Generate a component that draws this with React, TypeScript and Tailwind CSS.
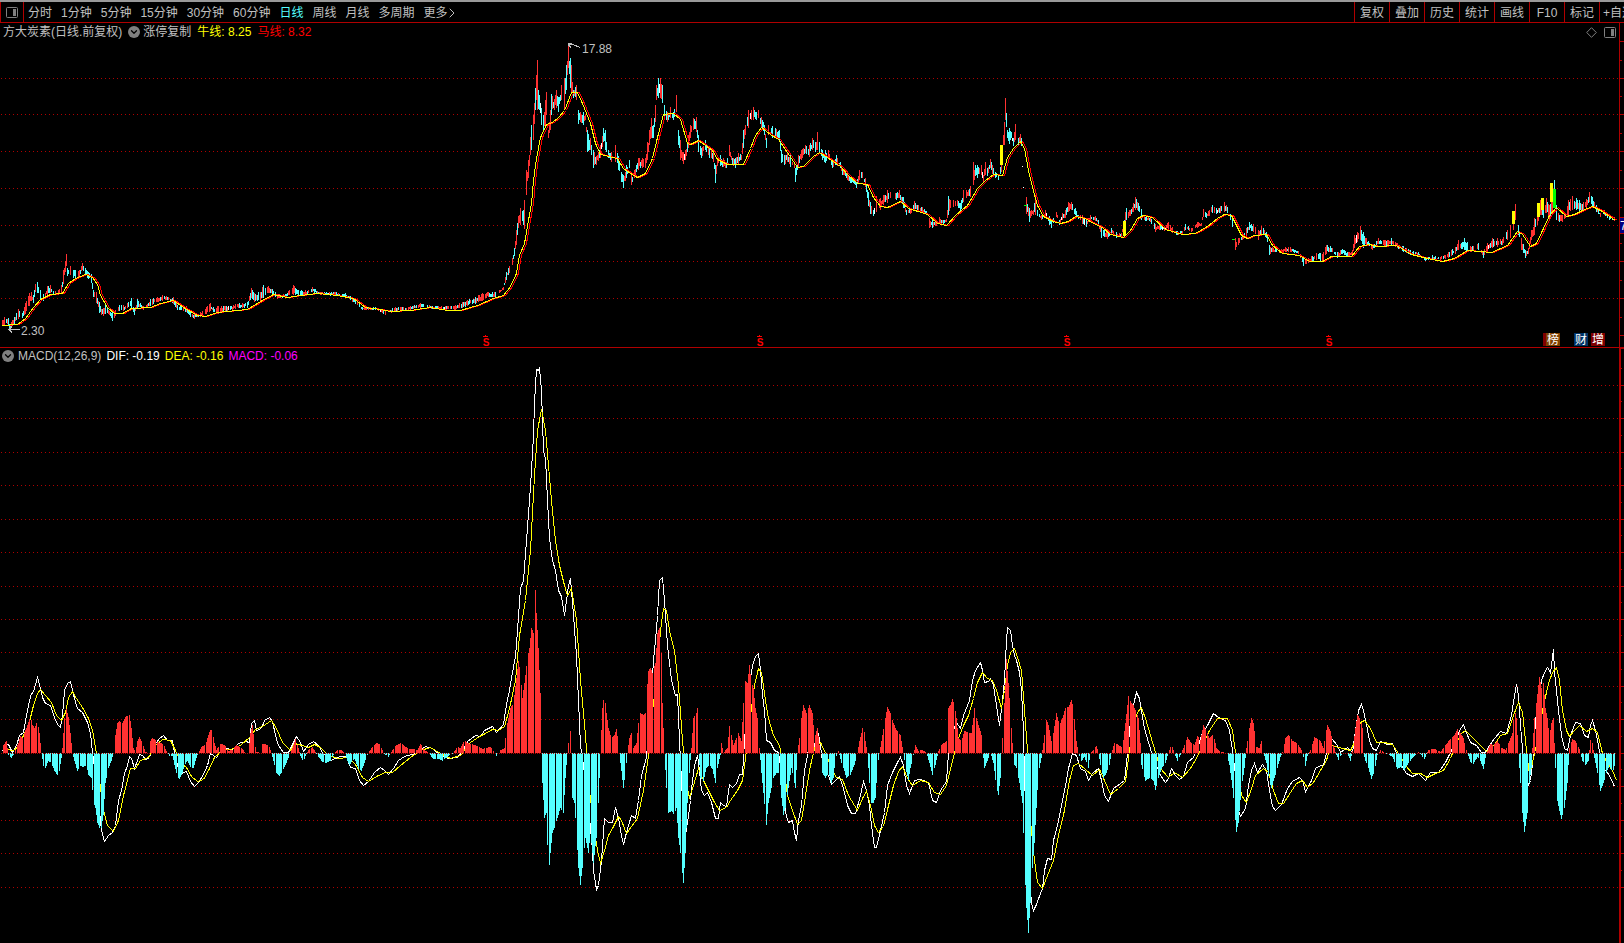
import { ChevronDown, ChevronRight } from "lucide-react";

const PERIODS = [
  "分时",
  "1分钟",
  "5分钟",
  "15分钟",
  "30分钟",
  "60分钟",
  "日线",
  "周线",
  "月线",
  "多周期",
];

const TOOLS = ["复权", "叠加", "历史", "统计", "画线", "F10", "标记"];

const UP = "#ff3232";
const DOWN = "#54ffff";
const FRAME = "#b00000";

const PRICE_GRID = [78, 114, 151, 188, 225, 261, 298];
const MACD_GRID = [385, 418, 452, 485, 519, 552, 586, 619, 652, 686, 719, 786, 820, 853, 887];
const ZERO = 753;

// x,high,low — one run per continuous stretch of trading
const CANDLE_RUNS = [
  "2,320,326 4,317,325 8,318,325 9,324,330 12,320,326 14,317,324 18,309,319 22,313,318 25,303,314 29,293,306 31,292,301 33,295,303 35,284,292 37,282,293 40,290,299 43,294,301 47,286,295 50,285,293 53,291,294 58,290,295 61,285,294 63,270,284 65,261,272 66,254,266 67,268,276 70,266,275 75,270,280 79,270,277 82,263,270 85,268,276 88,272,279 91,274,283 93,290,297 96,292,303 99,302,313 101,309,315 103,308,316 105,305,314 107,308,313 112,310,321 115,310,316 119,305,311 123,305,311 127,303,308 131,298,308 134,308,315 137,299,308 143,306,310 150,299,306 157,297,302 162,295,301 166,296,300 173,297,304 177,305,310 186,306,312 190,312,317 194,314,319 200,312,317 206,307,314 210,303,311 213,307,312 218,306,314 225,306,312 235,304,309 247,302,308 251,288,298 254,293,302 260,292,301 263,285,298 268,286,293 272,289,295 277,294,299 285,294,298 293,285,295 298,290,296 305,290,296 312,287,292 320,292,295 335,292,296 345,293,298 355,298,304 362,307,310 375,307,310 385,310,315 395,307,311 410,306,310 420,303,308 435,306,309 455,305,310 462,302,308 467,300,306 475,297,304 482,293,301 488,292,297 495,292,298 503,287,290 506,272,280 509,266,273 512,258,265 514,248,256 516,230,245 518,216,228 520,208,225 523,210,225 524,200,229 526,170,195 528,160,178 531,125,150 533,115,140 535,88,110 536,75,100 537,60,110 539,95,110 541,108,125 543,115,130 545,100,125 546,92,115 548,130,138 550,110,130 551,94,115 554,99,110 556,90,108 558,97,112 561,85,100 564,78,110 566,65,90 568,46,68 570,58,88 571,65,93 573,90,98 576,85,100 578,110,124 580,112,122 583,112,125 585,115,120 587,130,152 590,138,150 593,150,168 596,156,165 600,145,158 603,128,142 605,130,150 608,150,158 611,152,162 615,145,162 618,156,170 621,172,182 623,175,188 626,165,178 629,160,168 631,175,185 634,170,178 638,158,170 642,158,168 645,158,168 647,142,160 649,130,145 651,118,138 653,125,138 655,105,122 656,85,100 658,78,98 660,78,98 662,85,103 664,105,120 667,112,122 670,107,118 673,112,120 676,95,112 678,130,145 680,140,160 683,152,164 685,150,160 688,135,148 690,125,138 693,118,130 696,117,132 698,135,152 701,148,158 705,140,150 709,148,158 713,150,162 715,165,183 717,158,166 720,155,166 723,158,167 726,162,168 729,145,156 732,158,165 735,158,168 738,153,164 741,155,160 743,130,148 745,125,135 748,110,128 751,110,120 753,107,120 756,112,120 758,110,118 761,117,128 764,125,135 766,138,148 768,125,135 772,126,138 775,128,138 779,130,140 781,150,163 784,155,165 787,153,162 790,155,167 794,163,168 795,168,182 798,155,165 801,150,160 805,145,153 809,145,157 812,138,150 815,142,152 817,132,150 819,142,152 822,150,160 825,150,163 828,150,158 832,162,168 836,155,165 840,162,168 842,168,175 847,172,180 850,177,183 854,178,184 856,183,188 859,170,180 862,172,178 865,178,187 868,192,206 870,202,214 873,210,216 876,196,212 880,198,210 883,195,205 887,190,203 890,192,198 896,193,200 899,190,198 903,197,208 906,210,215 910,208,214 914,201,210 918,205,211 922,207,212 926,211,214 929,218,228 932,220,228 936,220,226 939,217,223 943,220,224 946,219,222 948,196,215 950,200,208 953,200,207 957,200,206 960,203,212 963,190,202 966,190,198 970,186,197 973,162,185 975,165,176 977,165,178 979,168,174 981,165,175 983,175,182 985,162,175 987,168,176 990,159,168 992,165,174 995,172,178 998,174,180 1001,162,172 1003,135,145 1004,122,145 1005,98,120 1006,113,127 1007,130,138 1009,128,144 1011,132,138 1013,138,146 1015,124,140 1018,138,145 1020,134,142 1021,138,146",
  "1026,197,214 1027,204,212 1029,208,222 1031,210,216 1033,210,215 1035,195,215 1037,210,216 1041,215,220 1045,210,216 1049,216,225 1051,220,228 1056,212,217 1059,220,225 1062,213,220 1065,210,218 1068,202,212 1071,202,210 1075,208,215 1078,215,219 1082,215,224 1086,220,227 1090,215,221 1095,216,221 1098,220,224 1101,228,238 1104,230,237 1107,232,239 1111,228,234 1116,232,238 1121,233,237 1125,212,222 1126,208,220 1130,210,216 1133,203,212 1135,197,210 1138,203,211 1141,209,220 1145,217,221 1150,216,222 1155,224,232 1159,225,230 1164,226,231 1168,222,230 1172,227,233 1177,231,235 1182,231,234 1185,224,230 1191,228,232 1197,222,228 1201,223,226 1203,209,217 1206,213,218 1209,210,216 1212,205,213 1216,208,214 1220,206,213 1224,202,212 1227,207,213 1230,214,220 1232,218,227",
  "1235,238,250 1238,238,245 1242,236,240 1246,228,236 1249,222,230 1253,224,232 1258,230,240 1261,226,234 1266,232,238 1269,245,255 1273,248,252 1279,250,253 1285,247,252 1290,247,252 1298,251,254 1303,258,266 1306,259,264 1311,256,262 1316,253,260 1320,253,261 1323,252,262 1326,245,254 1330,246,252 1337,252,258 1342,249,254 1347,252,257 1352,250,256 1354,235,248 1357,232,242 1360,226,240 1363,232,248 1368,241,246 1372,245,250 1378,238,244 1384,240,246 1391,238,245 1397,243,248 1403,246,252 1410,250,255 1418,252,255 1425,258,261 1432,255,259 1440,257,260 1448,252,258 1455,247,254 1458,240,250 1461,243,249 1464,238,250 1470,246,252 1478,243,250 1483,251,258 1487,243,252 1492,238,248 1497,238,247 1502,239,245 1507,230,240 1510,225,238 1513,212,230 1515,204,220 1518,225,235 1521,238,250 1525,250,258 1528,248,254 1531,230,240 1534,218,235 1537,210,225 1540,200,215 1543,205,218 1546,198,213 1549,205,220 1552,195,215 1554,180,200 1556,205,220 1559,215,222 1562,215,222 1565,213,218 1568,200,215 1572,196,210 1576,198,210 1579,200,212 1583,202,212 1586,199,208 1589,192,202 1592,197,207 1596,205,212 1600,213,217 1604,210,215 1609,215,220 1614,217,221",
];

const BULL_LINE =
  "2,325 17,324 25,318 33,307 40,299 50,294 62,293 68,283 75,278 85,274 92,277 97,284 100,295 107,307 114,313 122,313 131,308 150,307 160,303 173,300 183,307 197,315 205,316 217,312 247,309 260,301 273,294 287,297 300,295 317,293 337,295 353,298 365,307 380,309 390,311 410,310 430,307 447,310 460,310 477,305 493,298 503,295 510,286 516,273 519,255 524,243 528,220 531,203 533,180 536,158 540,137 546,124 552,122 558,117 564,110 571,92 577,92 582,103 586,113 590,123 595,143 600,154 617,158 623,168 630,173 637,177 645,173 652,158 657,137 663,114 673,113 680,119 687,143 690,144 698,140 712,150 717,159 727,164 743,164 750,148 755,135 761,127 770,134 778,139 787,152 797,167 803,166 813,156 819,152 827,157 840,166 848,175 857,183 867,184 873,197 880,206 887,207 900,201 908,208 927,214 937,223 946,225 955,215 967,205 977,188 985,180 993,174 1002,175 1007,157 1013,148 1020,141 1024,148 1028,170 1032,187 1037,205 1043,216 1053,221 1060,223 1068,221 1075,216 1085,218 1093,223 1102,227 1110,234 1123,237 1130,230 1137,218 1143,215 1152,217 1165,229 1182,234 1195,233 1207,226 1217,218 1224,214 1231,215 1236,225 1241,235 1247,238 1254,235 1266,234 1272,245 1282,253 1299,255 1309,261 1322,261 1331,256 1351,256 1359,246 1369,244 1377,246 1396,245 1411,254 1427,258 1442,261 1454,258 1467,250 1491,252 1507,245 1517,231 1522,234 1530,246 1536,243 1542,230 1549,215 1556,207 1566,216 1574,214 1582,210 1592,206 1602,211 1615,220";

const DIF_LINE =
  "2,751 5,743 8,744 12,752 16,745 19,735 23,732 26,715 29,700 31,693 33,692 35,684 37,677 40,688 42,697 45,703 50,705 54,717 57,724 60,727 62,715 64,690 67,683 70,681 72,690 74,698 77,708 82,712 87,722 90,733 92,752 95,775 98,800 101,830 104,841 108,835 112,832 115,825 118,800 121,790 124,773 127,765 129,756 131,758 134,768 137,760 139,754 142,755 145,759 149,757 152,749 156,742 159,738 163,735 167,740 172,740 174,752 177,765 181,773 186,771 190,781 194,786 198,782 203,774 207,765 210,753 213,755 216,757 220,751 225,748 232,749 238,743 245,741 249,742 251,723 254,720 256,730 261,728 264,720 269,717 272,721 275,735 278,745 283,752 288,752 293,742 296,736 300,742 303,751 308,744 313,741 318,745 322,752 330,760 340,756 346,756 350,767 355,768 359,780 363,785 368,781 374,772 380,767 384,770 388,774 393,768 398,760 404,756 415,753 425,746 432,748 440,755 448,758 457,757 462,751 467,741 475,735 480,736 484,730 492,726 496,732 503,724 506,704 509,690 512,672 515,656 517,630 520,588 523,580 526,540 529,500 531,470 533,435 534,402 536,369 538,370 539,368 541,390 543,450 545,458 547,500 549,538 552,560 555,570 558,590 561,596 564,615 566,600 568,585 570,578 571,590 573,615 576,655 578,700 580,745 583,765 588,805 592,850 593,870 596,889 598,885 601,860 604,818 608,822 612,822 615,807 618,818 621,835 623,844 626,832 631,815 635,818 638,800 641,775 646,757 649,720 653,660 655,640 657,615 659,580 662,577 664,600 667,645 671,680 675,695 677,694 679,740 682,800 685,835 688,815 690,800 692,780 694,765 697,755 699,770 701,790 704,795 707,792 711,802 715,818 718,818 720,802 723,805 726,806 729,784 732,787 736,783 739,774 742,774 744,740 747,705 749,685 752,665 755,656 758,653 760,670 762,695 764,710 766,740 770,742 774,750 778,752 782,780 785,812 788,822 792,820 794,832 796,840 798,820 801,805 804,770 807,755 810,735 814,745 816,735 818,733 820,745 823,770 828,775 831,784 835,780 839,776 843,788 847,805 851,813 855,813 860,795 863,781 866,790 869,805 871,825 874,847 876,847 880,830 884,812 887,785 892,772 897,762 900,757 903,765 906,785 909,793 914,780 920,779 928,782 932,800 936,802 940,790 946,781 948,753 951,735 956,722 960,728 963,715 969,700 972,680 975,670 980,662 982,670 984,682 988,681 990,678 993,685 996,705 999,725 1002,700 1004,680 1006,640 1007,627 1010,630 1012,645 1014,655 1016,660 1019,672 1021,690 1023,730 1024,780 1028,860 1031,903 1033,910 1036,904 1040,893 1042,888 1044,870 1047,858 1051,859 1053,840 1057,825 1062,800 1065,785 1068,768 1072,753 1076,755 1080,768 1085,771 1088,780 1092,773 1098,768 1101,780 1104,795 1108,801 1113,788 1120,783 1124,780 1127,753 1130,720 1134,700 1136,692 1139,698 1141,710 1144,728 1148,742 1152,755 1156,765 1160,775 1165,782 1168,778 1171,768 1175,775 1179,779 1183,776 1187,762 1193,757 1197,748 1201,735 1207,725 1213,713 1218,717 1225,720 1229,730 1232,750 1235,775 1238,810 1240,816 1245,808 1248,785 1251,770 1254,763 1257,772 1262,764 1266,770 1269,790 1272,806 1275,810 1281,804 1287,788 1292,781 1299,777 1302,780 1305,791 1311,780 1315,768 1320,765 1323,765 1327,748 1331,738 1337,745 1340,752 1347,747 1352,752 1355,730 1358,710 1361,704 1363,710 1366,724 1369,740 1372,748 1376,750 1380,741 1387,744 1392,743 1396,753 1400,763 1406,773 1412,776 1418,773 1425,780 1430,772 1438,772 1445,762 1450,752 1455,742 1459,730 1463,724 1465,730 1470,742 1476,745 1481,752 1485,752 1489,745 1494,738 1500,731 1506,733 1511,715 1514,695 1516,684 1518,695 1520,725 1523,760 1527,786 1530,780 1533,755 1535,720 1538,700 1541,680 1544,672 1547,667 1550,672 1553,649 1554,672 1556,690 1558,710 1561,735 1564,748 1567,750 1570,735 1575,722 1580,723 1584,735 1588,737 1590,725 1592,720 1595,730 1598,745 1601,765 1605,770 1609,775 1614,786";

const DEA_LINE =
  "5,749 13,750 18,746 23,735 28,725 33,705 37,693 40,689 45,695 51,702 56,715 61,720 65,712 68,697 72,691 76,698 82,707 88,718 92,730 96,753 99,780 103,810 107,825 113,831 118,820 123,795 130,768 135,768 140,760 148,757 155,745 162,739 170,740 175,750 181,763 186,767 191,776 197,781 203,779 209,768 214,757 222,750 230,749 240,745 250,736 255,729 262,726 271,720 276,728 282,742 290,750 294,743 302,745 308,747 314,744 320,747 328,755 338,758 348,757 355,764 362,777 368,781 376,776 385,772 392,772 400,765 410,757 420,750 430,747 440,753 450,758 460,755 470,742 479,736 485,733 492,729 498,730 504,726 509,708 515,680 519,635 525,600 530,550 534,475 537,430 541,409 545,430 548,465 551,500 555,540 559,565 564,585 567,595 571,588 576,620 580,680 585,735 589,790 594,830 597,850 600,863 604,850 608,835 613,826 618,816 621,820 626,833 631,826 637,818 643,790 648,755 652,710 656,680 660,630 663,608 666,610 669,630 674,650 678,685 682,740 686,785 689,797 693,785 698,768 703,780 708,790 714,802 719,810 726,807 730,800 737,790 742,780 746,750 750,715 754,685 758,668 761,672 765,700 768,718 773,735 779,745 783,765 787,795 792,810 797,824 801,820 805,795 810,765 815,745 820,742 826,755 832,770 836,777 842,779 848,795 857,810 862,798 866,791 870,805 874,825 878,832 883,826 888,805 893,785 898,771 902,766 907,778 912,785 920,780 928,782 934,792 940,794 946,785 951,765 957,740 963,725 968,715 973,698 977,682 982,672 987,678 992,680 996,690 1001,708 1004,690 1007,665 1010,652 1014,648 1018,660 1021,670 1024,710 1027,750 1030,820 1034,860 1037,882 1042,888 1047,875 1053,860 1058,835 1064,810 1069,780 1073,765 1078,763 1085,769 1092,775 1099,769 1104,780 1110,794 1118,788 1125,781 1129,750 1133,725 1137,712 1141,707 1145,718 1150,735 1155,752 1160,768 1168,777 1174,772 1182,777 1190,768 1196,758 1202,745 1209,730 1217,718 1227,718 1232,730 1236,760 1241,795 1246,802 1251,788 1255,775 1263,768 1268,772 1273,790 1278,803 1283,803 1290,792 1296,783 1302,780 1307,787 1313,782 1320,770 1326,760 1330,745 1335,746 1342,748 1350,750 1355,740 1360,722 1364,720 1370,728 1376,742 1384,742 1392,744 1398,753 1405,765 1412,773 1420,773 1427,777 1435,773 1443,770 1450,758 1456,742 1461,733 1465,730 1472,737 1478,743 1486,751 1494,744 1500,735 1507,733 1513,715 1518,702 1522,712 1526,750 1529,775 1532,762 1538,735 1543,705 1548,683 1552,672 1556,667 1559,680 1562,710 1566,730 1569,736 1574,730 1579,725 1586,731 1592,728 1597,732 1602,753 1607,763 1612,770 1616,780";

// x,height above (or below) the zero line
const HISTOGRAM =
  "1,0 3,8 6,12 8,-2 11,-5 14,0 18,10 20,17 22,15 26,25 30,37 32,28 34,25 37,32 39,20 41,0 43,-13 45,-15 48,-8 51,-10 54,-18 57,-22 59,-18 61,-5 62,5 64,35 66,44 68,36 70,20 72,0 74,-8 77,-18 80,-13 83,-14 86,-12 88,-22 91,-25 93,-50 95,-55 97,-70 99,-75 101,-75 103,-62 105,-30 108,-15 111,-8 113,0 115,18 117,30 119,32 122,30 125,36 129,38 131,25 133,5 135,0 137,12 139,16 142,10 145,1 148,0 150,12 152,15 156,12 159,10 163,9 166,2 169,-3 172,-3 174,-12 177,-24 179,-26 182,-20 184,-12 187,-8 190,-14 193,-15 196,-5 198,0 201,6 205,8 208,18 210,23 212,22 214,10 216,3 220,9 224,8 228,2 232,3 236,8 241,5 245,0 248,0 250,20 252,28 254,10 256,1 260,0 262,9 265,9 269,6 271,0 273,-8 276,-20 279,-23 282,-18 286,-10 290,0 293,8 295,14 298,5 300,-3 303,-9 305,-3 308,3 312,6 315,1 318,-4 322,-9 326,-10 330,-8 334,0 337,3 341,3 344,0 347,-8 349,-12 352,-8 354,-6 358,-16 361,-18 364,-10 368,0 372,6 376,10 380,8 383,0 388,-4 392,3 396,8 401,10 405,6 409,4 414,4 417,3 420,9 424,3 428,0 433,-6 438,-6 442,-8 448,-3 453,0 457,6 460,5 464,13 467,10 474,8 482,4 490,6 494,0 496,-3 499,2 504,5 506,25 510,45 513,50 516,75 518,92 520,80 522,55 524,70 527,95 529,105 531,125 533,120 535,163 536,140 538,105 540,60 541,10 542,-30 544,-65 546,-60 548,-125 550,-100 552,-80 554,-75 557,-65 560,-55 563,-60 565,-25 567,0 569,20 570,22 571,0 572,-45 574,-50 576,-80 578,-115 580,-132 582,-115 585,-85 588,-100 590,-80 593,-110 596,-85 598,-50 600,0 602,45 604,60 606,40 608,25 611,15 614,18 616,24 618,10 620,-10 623,-35 625,-20 627,0 629,15 631,20 633,5 636,10 638,30 640,40 643,38 645,40 646,55 648,82 650,85 652,80 655,90 657,120 659,125 661,100 662,50 664,0 666,-35 668,-60 671,-58 674,-62 676,-55 678,-85 680,-100 683,-130 685,-100 687,-50 689,-20 691,5 693,35 696,40 697,45 698,0 700,-25 703,-28 706,-15 709,-12 712,-16 715,-30 717,-15 720,-2 721,10 723,0 727,5 729,27 731,18 733,8 736,15 738,20 741,12 743,50 745,72 747,70 749,88 751,70 753,65 755,45 757,35 759,5 761,-20 763,-40 766,-72 768,-50 770,-40 773,-25 776,-20 779,-20 781,-45 783,-62 785,-55 788,-35 791,-15 793,-25 795,-35 797,0 799,15 801,35 803,48 806,40 809,48 812,40 814,15 817,25 820,0 822,-20 825,-25 828,-20 831,-30 833,-25 835,-5 838,2 841,-10 843,-15 846,-25 850,-22 854,-12 857,0 859,12 861,20 863,29 865,12 867,0 869,-30 871,-50 873,-50 875,-45 877,-15 879,0 881,12 884,30 887,46 890,40 893,30 896,23 900,18 903,0 905,-15 908,-27 910,-15 913,-2 915,8 918,2 922,3 926,0 929,-10 932,-22 935,-12 938,2 941,8 946,12 948,45 950,48 952,54 954,48 956,35 958,15 961,12 964,22 968,20 971,20 973,35 974,45 976,35 979,25 981,18 983,-5 984,-15 987,-8 990,0 993,-10 996,-35 998,-42 1000,-25 1001,0 1003,30 1005,70 1006,94 1008,70 1010,40 1012,10 1014,-12 1016,-15 1019,-30 1022,-50 1024,-110 1026,-155 1028,-180 1030,-150 1032,-115 1034,-90 1036,-55 1038,-20 1041,-5 1043,10 1046,33 1048,28 1051,12 1053,20 1056,40 1059,28 1062,35 1065,45 1068,46 1071,53 1073,45 1076,12 1078,0 1081,-8 1084,-4 1088,-15 1090,0 1093,3 1096,7 1098,0 1100,-12 1103,-25 1106,-20 1109,-12 1111,0 1114,10 1118,8 1122,5 1125,30 1128,57 1131,50 1133,48 1136,40 1138,35 1140,10 1141,-12 1145,-28 1149,-25 1153,-28 1155,-37 1158,-25 1161,-16 1165,-10 1168,0 1171,9 1174,0 1177,-8 1181,0 1184,8 1187,16 1190,11 1194,8 1197,17 1200,13 1203,28 1206,22 1209,15 1213,19 1216,5 1220,1 1226,0 1229,-12 1232,-35 1234,-55 1236,-79 1238,-70 1241,-35 1244,-15 1246,5 1249,25 1251,35 1253,30 1256,6 1259,5 1261,12 1263,0 1266,-10 1269,-30 1271,-35 1274,-25 1277,-15 1280,-4 1283,3 1285,15 1288,18 1292,12 1296,10 1300,5 1302,0 1305,-13 1307,-3 1311,5 1314,16 1317,14 1320,12 1323,5 1325,18 1327,28 1330,22 1333,8 1336,-2 1338,-7 1342,0 1347,0 1350,-8 1352,2 1355,25 1357,38 1360,34 1362,25 1363,0 1365,-8 1368,-15 1371,-26 1374,-18 1377,-2 1380,3 1386,-1 1392,-4 1397,-16 1400,-14 1404,-17 1408,-10 1413,-4 1418,1 1424,-6 1428,3 1434,4 1440,1 1445,8 1450,14 1454,18 1457,24 1460,20 1463,15 1465,5 1467,0 1470,-9 1473,-11 1477,-4 1480,-8 1483,-16 1486,0 1490,9 1493,8 1497,12 1501,5 1505,3 1509,12 1512,20 1514,45 1516,35 1518,0 1520,-30 1522,-60 1524,-79 1527,-60 1529,-30 1531,-15 1532,5 1534,35 1536,50 1538,68 1539,76 1541,65 1543,70 1545,45 1547,35 1549,15 1551,30 1553,35 1555,-15 1557,-48 1559,-58 1561,-66 1564,-55 1567,-30 1569,5 1572,14 1575,12 1579,4 1582,-8 1585,-12 1588,-8 1590,13 1592,10 1594,-5 1597,-20 1600,-38 1603,-30 1606,-20 1609,-12 1612,-20 1615,-10";

// x, y, height of the limit-up blocks
const LIMIT_UPS = [
  [1000, 145, 20],
  [1123, 221, 15],
  [1512, 211, 13],
  [1537, 203, 14],
  [1541, 198, 12],
  [1550, 183, 19],
];

const EVENT_MARKS = [485, 759, 1066, 1328];

function parse(data: string): number[][] {
  return data.split(" ").map((p) => p.split(",").map(Number));
}

// Stable pseudo-random value in [0, 1)
function noise(n: number): number {
  const v = Math.sin(n * 12.9898) * 43758.5453;
  return v - Math.floor(v);
}

interface Bar {
  x: number;
  y: number;
  h: number;
  fill: string;
}

function buildCandles(data: string): Bar[] {
  const points = parse(data);
  const bars: Bar[] = [];
  points.forEach(([x, hi, lo], i) => {
    const prev = points[i - 1];
    const falling = prev ? hi + lo > prev[1] + prev[2] : false;
    const flip = noise(x) > 0.8;
    bars.push({ x, y: hi, h: lo - hi, fill: falling !== flip ? DOWN : UP });

    const next = points[i + 1];
    if (!next) return;
    for (let k = x + 1; k < next[0]; k++) {
      if (noise(k + 7) < 0.3) continue;
      const t = (k - x) / (next[0] - x);
      const top = hi + (next[1] - hi) * t;
      const bottom = lo + (next[2] - lo) * t;
      const range = bottom - top;
      const y = Math.round(top + range * noise(k * 3) * 0.4);
      const end = Math.round(bottom - range * noise(k * 5) * 0.3);
      const c = noise(k * 11);
      const down = next[1] + next[2] > hi + lo ? c < 0.65 : c < 0.35;
      bars.push({
        x: k,
        y,
        h: Math.max(1, end - y),
        fill: c > 0.98 ? "#ffffff" : down ? DOWN : UP,
      });
    }
  });
  return bars;
}

function buildHistogram(data: string): Bar[] {
  const points = parse(data);
  const bars: Bar[] = [];
  for (let i = 0; i < points.length - 1; i++) {
    const [x0, v0] = points[i];
    const [x1, v1] = points[i + 1];
    for (let x = x0; x < x1; x++) {
      if (x % 7 === 2) continue;
      const v = Math.round(v0 + ((v1 - v0) * (x - x0)) / (x1 - x0));
      if (v === 0) continue;
      bars.push({
        x,
        y: v > 0 ? ZERO - v : ZERO,
        h: Math.abs(v),
        fill: v > 0 ? UP : DOWN,
      });
    }
  }
  return bars;
}

const CANDLES = CANDLE_RUNS.flatMap(buildCandles);
const MACD_BARS = buildHistogram(HISTOGRAM);

export default function App() {
  return (
    <div className="flex h-screen flex-col overflow-hidden bg-black font-['Liberation_Sans','Noto_Sans_CJK_SC',sans-serif] text-xs leading-4 text-[#c0c0c0]">
      <Toolbar />
      <main className="flex min-h-0 flex-1 flex-col">
        <PricePane />
        <MacdPane />
      </main>
    </div>
  );
}

function Toolbar() {
  return (
    <header className="flex h-[23px] shrink-0 items-stretch border-t-2 border-b border-t-[#999999] border-b-[#b00000]">
      <button
        aria-label="侧栏"
        className="flex w-6 shrink-0 items-center justify-center border-x border-[#b00000]"
      >
        <PanelIcon />
      </button>
      <nav className="flex items-center gap-[9px] pt-px pl-1 whitespace-nowrap">
        {PERIODS.map((p) => (
          <button key={p} className={p === "日线" ? "text-[#54ffff]" : ""}>
            {p}
          </button>
        ))}
        <button className="flex items-center">
          更多
          <ChevronRight className="-ml-1 size-4" strokeWidth={1.5} />
        </button>
      </nav>
      <div className="ml-auto flex whitespace-nowrap">
        {TOOLS.map((t) => (
          <button key={t} className="w-[35px] border-l border-[#b00000] pt-px">
            {t}
          </button>
        ))}
        <button className="w-[25px] overflow-hidden border-l border-[#b00000] pt-px pl-[3px] text-left">
          +自选
        </button>
      </div>
    </header>
  );
}

function PricePane() {
  return (
    <section className="flex min-h-0 flex-[324] border-b border-[#b00000]">
      <div className="relative flex min-w-0 flex-1 flex-col">
        <div className="flex h-[18px] shrink-0 items-center pr-[3px] pl-[3px] whitespace-nowrap">
          <span>方大炭素(日线.前复权)</span>
          <MenuDot label="主图指标" className="ml-1.5" />
          <span className="ml-[3px]">涨停复制</span>
          <span className="ml-1.5 text-[#ffff00]">牛线: 8.25</span>
          <span className="ml-1.5 text-[#ff0000]">马线: 8.32</span>
          <button aria-label="标记点" className="ml-auto">
            <svg className="size-[11px]" viewBox="0 0 11 11" fill="none" stroke="#808080">
              <path d="M5.5 .7 10.3 5.5 5.5 10.3 .7 5.5Z" />
            </svg>
          </button>
          <button aria-label="右侧栏" className="ml-[7px]">
            <PanelIcon />
          </button>
        </div>
        <svg
          className="min-h-0 w-full flex-1"
          viewBox="0 41 1619 306"
          preserveAspectRatio="none"
          shapeRendering="crispEdges"
        >
          <Grid rows={PRICE_GRID} />
          <Bars bars={CANDLES} />
          <g transform="translate(.5 .5)" fill="none">
            <polyline points={BULL_LINE} stroke="#ff0000" transform="translate(2 0)" />
            <polyline points={BULL_LINE} stroke="#ffff00" />
          </g>
          {LIMIT_UPS.map(([x, y, h]) => (
            <rect key={x} x={x} y={y} width={3} height={h} fill="#ffff00" />
          ))}
          <rect x={1553} y={189} width={3} height={19} fill="#00ff00" />
          <rect x={1024} y={205} width={3} height={1} fill="#00ff00" />
          <rect x={1232} y={239} width={3} height={1} fill="#00ff00" />
          <rect x={1022} y={166} width={1} height={1} fill="#ffffff" />
          <rect x={1023} y={187} width={1} height={1} fill="#ffffff" />

          <g fill="none" stroke="#c0c0c0">
            <path d="M568.5 46V43.500H572M569 44.500H573L580 47.500M569 45L571 48" />
            <path d="M20 329.500H9M12 326.500 9 329.500 12 332.500" />
          </g>
          <g fill="#c0c0c0" fontSize={12}>
            <text x={582} y={53}>17.88</text>
            <text x={21} y={335}>2.30</text>
          </g>
          {EVENT_MARKS.map((x) => (
            <g key={x} fill="#ff0000">
              <path d={`M${x - 2} 337V336H${x}V335H${x + 1}V336H${x + 3}V337Z`} />
              <text
                x={x + 1}
                y={346}
                fontSize={10}
                fontWeight={700}
                textAnchor="middle"
              >
                S
              </text>
            </g>
          ))}
        </svg>
        <div className="absolute right-[14px] bottom-px flex text-white">
          <Tag text="榜" className="mr-3.5 border-l-[3px] border-[#800000] bg-[#804000]" />
          <Tag text="财" className="mr-[3px] bg-[#003366]" />
          <Tag text="增" className="bg-[#800000]" />
        </div>
      </div>
      <svg
        className="h-full w-[5px] shrink-0"
        viewBox="0 23 5 324"
        preserveAspectRatio="none"
        shapeRendering="crispEdges"
        fill={FRAME}
      >
        <rect x={0} y={23} width={1} height={324} />
        <rect x={0} y={41} width={5} height={1} />
        {PRICE_GRID.map((y) => (
          <g key={y}>
            <rect x={1} y={y} width={4} height={1} />
            <rect x={1} y={y - 18} width={2} height={1} />
          </g>
        ))}
        <rect x={1} y={317} width={2} height={1} />
        <rect x={1} y={335} width={4} height={1} />
        <rect x={1} y={217} width={4} height={17} />
        <rect x={1} y={218} width={4} height={15} fill="#000080" />
        <text x={1} y={230} fontSize={12} fill="#ffffff">
          7
        </text>
      </svg>
    </section>
  );
}

function MacdPane() {
  return (
    <section className="flex min-h-0 flex-[595]">
      <div className="flex min-w-0 flex-1 flex-col">
        <div className="flex h-4 shrink-0 items-center gap-[5px] pl-0.5 whitespace-nowrap">
          <MenuDot label="副图指标" className="-mr-px" />
          <span>MACD(12,26,9)</span>
          <span className="text-white">DIF: -0.19</span>
          <span className="text-[#ffff00]">DEA: -0.16</span>
          <span className="text-[#ff00ff]">MACD: -0.06</span>
        </div>
        <svg
          className="min-h-0 w-full flex-1"
          viewBox="0 364 1619 579"
          preserveAspectRatio="none"
          shapeRendering="crispEdges"
        >
          <Grid rows={MACD_GRID} />
          <g transform="translate(.5 .5)" fill="none">
            <polyline points={DIF_LINE} stroke="#ffffff" />
            <polyline points={DEA_LINE} stroke="#ffff00" />
          </g>
          <Bars bars={MACD_BARS} />
          <line
            x1={1}
            x2={1616}
            y1={ZERO + 0.5}
            y2={ZERO + 0.5}
            stroke={FRAME}
            strokeDasharray="1 1"
          />
        </svg>
      </div>
      <svg
        className="h-full w-[5px] shrink-0"
        viewBox="0 348 5 595"
        preserveAspectRatio="none"
        shapeRendering="crispEdges"
        fill={FRAME}
      >
        <rect x={0} y={348} width={2} height={595} />
        <rect x={0} y={348} width={5} height={1} />
        {[...MACD_GRID, ZERO].map((y) => (
          <g key={y}>
            <rect x={2} y={y} width={3} height={1} />
            <rect x={2} y={y - 17} width={1} height={1} />
          </g>
        ))}
      </svg>
    </section>
  );
}

function Grid({ rows }: { rows: number[] }) {
  return (
    <g stroke={FRAME} strokeDasharray="1 3">
      {rows.map((y) => (
        <line key={y} x1={1} x2={1619} y1={y + 0.5} y2={y + 0.5} />
      ))}
    </g>
  );
}

function Bars({ bars }: { bars: Bar[] }) {
  return (
    <g>
      {bars.map((b) => (
        <rect key={b.x} x={b.x} y={b.y} width={1} height={b.h} fill={b.fill} />
      ))}
    </g>
  );
}

function MenuDot({ label, className }: { label: string; className: string }) {
  return (
    <button
      aria-label={label}
      className={`flex size-3 shrink-0 items-center justify-center rounded-full bg-[#808080] text-black ${className}`}
    >
      <ChevronDown className="size-2.5" strokeWidth={3} />
    </button>
  );
}

function PanelIcon() {
  return (
    <svg className="h-[11px] w-3" viewBox="0 0 12 11" fill="none" stroke="#808080">
      <rect x=".5" y=".5" width="11" height="10" rx="1" />
      <rect x="7" y="2" width="3" height="7" fill="#808080" stroke="none" />
    </svg>
  );
}

function Tag({ text, className }: { text: string; className: string }) {
  return (
    <span className={`flex h-[13px] items-center px-px leading-3 ${className}`}>
      {text}
    </span>
  );
}
